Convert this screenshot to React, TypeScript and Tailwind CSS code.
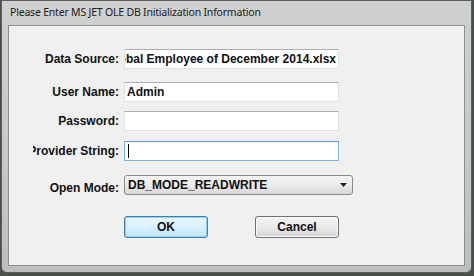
import React from 'react';

const labelCls = "flex-none w-[110px] text-right text-[12px] font-bold text-[#111]";
const inputCls = "flex-none w-[215px] h-[20px] bg-white border border-[#dfe3e8] border-t-[#abadb3] flex items-center px-[2px] text-[12px] font-bold text-[#111] overflow-hidden";

const App = () => {
  return (
    <div className="w-[474px] h-[276px] bg-[#4b4f4a] overflow-hidden font-['Liberation_Sans',Arial,sans-serif]">
      <div className="ml-[1px] w-[471px] h-[273px] rounded-b-[6px] border border-[#5c5c5c] bg-gradient-to-b from-[#cfd0d0] via-[#c8c9c9] to-[#bdbebe] flex flex-col">
        {/* title bar */}
        <div className="h-[24px] flex items-center pl-[8px] text-[10.5px] text-[#1b1b1b] font-['Noto_Sans',sans-serif] tracking-[-0.2px]">
          Please Enter MS JET OLE DB Initialization Information
        </div>
        {/* client area */}
        <div className="mx-[6px] h-[241px] border border-[#8d8d8d] bg-[#f0f0f0] flex flex-col pt-[23px]">
          <div className="flex items-center gap-[5px]">
            <div className={labelCls}>Data Source:</div>
            <div className={inputCls + " justify-end"}>
              <span className="whitespace-nowrap">Global Employee of December 2014.xlsx</span>
            </div>
          </div>
          <div className="flex items-center gap-[5px] mt-[13px]">
            <div className={labelCls}>User Name:</div>
            <div className={inputCls}>Admin</div>
          </div>
          <div className="flex items-center gap-[5px] mt-[9px]">
            <div className={labelCls}>Password:</div>
            <div className={inputCls}></div>
          </div>
          <div className="flex items-center gap-[5px] mt-[10px]">
            <div className="flex-none w-[110px] flex justify-end">
              <div className="w-[86px] overflow-hidden flex justify-end">
                <span className="whitespace-nowrap text-[12px] font-bold text-[#111]">Provider String:</span>
              </div>
            </div>
            <div className="flex-none w-[215px] h-[20px] bg-white border border-[#7eb4ea] border-t-[#569de5] flex items-center pl-[3px]">
              <div className="w-[1px] h-[14px] bg-black" />
            </div>
          </div>
          <div className="flex items-center gap-[5px] mt-[12px]">
            <div className={labelCls + " pt-[6px]"}>Open Mode:</div>
            <div className="flex-none w-[229px] h-[20px] rounded-[3px] border border-[#8a8a8a] bg-gradient-to-b from-[#f3f3f3] via-[#ebebeb] to-[#d8d8d8] flex items-center pl-[3px] pr-[5px]">
              <span className="flex-1 text-[12px] font-bold text-[#111]">DB_MODE_READWRITE</span>
              <svg width="7" height="4" viewBox="0 0 7 4"><path d="M0 0h7L3.5 4z" fill="#222" /></svg>
            </div>
          </div>
          <div className="flex mt-[19px] pl-[115px] gap-[47px]">
            <button className="w-[84px] h-[22px] rounded-[3px] border border-[#3c7fb1] bg-gradient-to-b from-[#eaf6fd] via-[#d9f0fc] to-[#bee6fd] shadow-[inset_0_0_0_1px_#8fd0f6] text-[12px] font-bold text-[#111]">
              OK
            </button>
            <button className="w-[84px] h-[22px] rounded-[3px] border border-[#707070] bg-gradient-to-b from-[#f2f2f2] via-[#ebebeb] to-[#d3d3d3] shadow-[inset_0_0_0_1px_#fbfbfb] text-[12px] font-bold text-[#111]">
              Cancel
            </button>
          </div>
        </div>
      </div>
    </div>
  );
};

export default App;
